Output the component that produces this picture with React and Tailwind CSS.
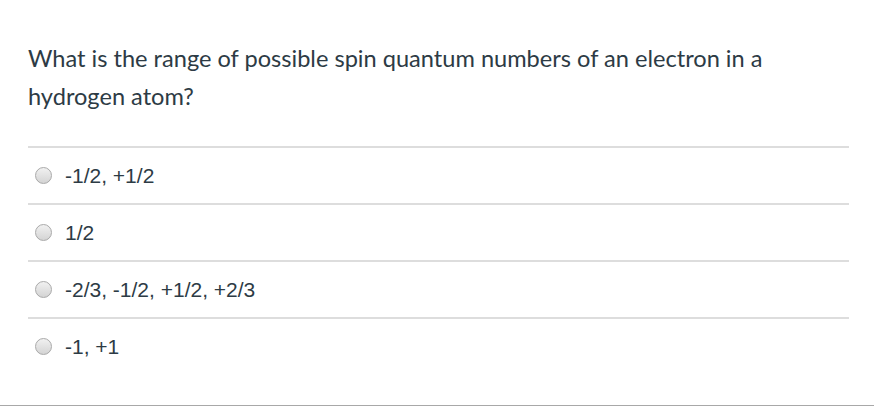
export default function App() {
  const options = ["-1/2, +1/2", "1/2", "-2/3, -1/2, +1/2, +2/3", "-1, +1"];
  return (
    <div className="w-[874px] h-[406px] bg-white overflow-hidden flex flex-col">
      <div className="flex-1 pl-[28px] pr-[25px]">
        <div className="pt-[39px] pr-[60px] text-[23.6px] leading-[38px] text-[#2d3b45] font-['Lato',sans-serif]">
          What is the range of possible spin quantum numbers of an electron in a hydrogen atom?
        </div>
        <div className="mt-[31px]">
          {options.map((o) => (
            <div key={o} className="border-t-2 border-[#dddddd] h-[57px] flex items-center">
              <span className="ml-[7px] w-[17px] h-[17px] rounded-full border border-[#a9a9a9] bg-gradient-to-b from-[#f1f1f1] to-[#d4d4d4] shrink-0" />
              <span className="ml-[13px] text-[21px] text-[#2d3b45] font-['Liberation_Sans',Arial,sans-serif]">{o}</span>
            </div>
          ))}
        </div>
      </div>
      <div className="h-px bg-[#a8a8a8]" />
    </div>
  );
}
